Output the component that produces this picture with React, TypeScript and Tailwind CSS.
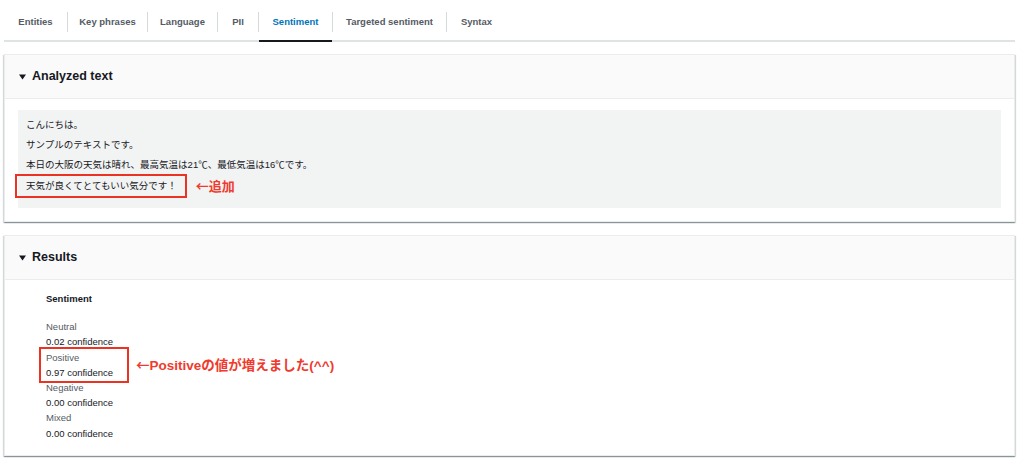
import React from "react";

const FONT = { fontFamily: '"Liberation Sans", "Noto Sans CJK JP", sans-serif' };
const CJK = { fontFamily: '"Noto Sans CJK JP", sans-serif' };

const tabs: { label: string; w: string; active?: boolean }[] = [
  { label: "Entities", w: "w-[63px]" },
  { label: "Key phrases", w: "w-[79px]" },
  { label: "Language", w: "w-[69px]" },
  { label: "PII", w: "w-[40px]" },
  { label: "Sentiment", w: "w-[73px]", active: true },
  { label: "Targeted sentiment", w: "w-[113px]" },
  { label: "Syntax", w: "w-[59px]" },
];

function Caret() {
  return (
    <svg width="7" height="6" viewBox="0 0 7 6" className="shrink-0">
      <path d="M0 0.5 H7 L3.5 5.5 Z" fill="#16191f" />
    </svg>
  );
}

function PanelHeader({ title }: { title: string }) {
  return (
    <div className="h-[44px] bg-[#fafafa] border-b border-[#eaeded] flex items-center pl-[14px] gap-[6px]">
      <Caret />
      <span className="text-[12.5px] font-bold text-[#16191f] leading-none">{title}</span>
    </div>
  );
}

const panelCls =
  "ml-[4px] w-[1011px] bg-white border border-[#eaeded] shadow-[0_1px_1px_0_rgba(0,28,36,0.3),1px_1px_1px_0_rgba(0,28,36,0.12),-1px_1px_1px_0_rgba(0,28,36,0.12)]";

const results = [
  { label: "Neutral", value: "0.02 confidence" },
  { label: "Positive", value: "0.97 confidence", mark: true },
  { label: "Negative", value: "0.00 confidence" },
  { label: "Mixed", value: "0.00 confidence" },
];

export default function App() {
  return (
    <div className="w-[1024px] h-[460px] bg-white overflow-hidden" style={FONT}>
      {/* Tabs */}
      <div className="ml-[4px] w-[1011px] h-[42px] flex border-b-2 border-[#dfe3e3]">
        {tabs.map((t, i) => (
          <React.Fragment key={t.label}>
            {i > 0 && <div className="w-px h-[20px] self-center mt-[4px] bg-[#d5dbdb]" />}
            <div
              className={`${t.w} mb-[-2px] pt-[4px] flex items-center justify-center border-b-2 text-[9.5px] font-bold ${
                t.active ? "border-[#16191f] text-[#0073bb]" : "border-transparent text-[#545b64]"
              }`}
            >
              {t.label}
            </div>
          </React.Fragment>
        ))}
      </div>

      {/* Analyzed text */}
      <div className={`${panelCls} mt-[12px]`}>
        <PanelHeader title="Analyzed text" />
        <div className="pt-[11px] pl-[13px] pr-[13px] pb-[13px]">
          <div className="bg-[#f2f3f3] pt-[5px] pb-[12px] pl-[8px] text-[9.5px] leading-[20px] text-[#16191f]">
            <div>こんにちは。</div>
            <div>サンプルのテキストです。</div>
            <div>本日の大阪の天気は晴れ、最高気温は21℃、最低気温は16℃です。</div>
            <div className="mt-[1px]">
              <span className="relative inline-block">
                天気が良くてとてもいい気分です！
                <span className="absolute -top-[2px] -bottom-[2px] -left-[11px] -right-[10px] border-2 border-[#ea3323]" />
                <span className="absolute top-1/2 -translate-y-1/2 left-[calc(100%+19px)] whitespace-nowrap text-[13px] font-bold text-[#ef3a2d] leading-none">
                  <span style={CJK}>←</span>追加
                </span>
              </span>
            </div>
          </div>
        </div>
      </div>

      {/* Results */}
      <div className={`${panelCls} mt-[13px]`}>
        <PanelHeader title="Results" />
        <div className="pt-[11px] pl-[41px] pb-[14px] text-[9.5px] leading-[15.2px]">
          <div className="font-bold text-[#16191f] mb-[13px]">Sentiment</div>
          {results.map((r) =>
            r.mark ? (
              <div key={r.label} className="relative w-fit">
                <div className="text-[#545b64]">{r.label}</div>
                <div className="text-[#16191f]">{r.value}</div>
                <span className="absolute -top-[3px] -bottom-[3px] -left-[7px] -right-[16px] border-2 border-[#ea3323]" />
                <span className="absolute top-1/2 -translate-y-1/2 left-[calc(100%+23px)] whitespace-nowrap text-[13.5px] font-bold text-[#ef3a2d] leading-none">
                  <span style={CJK}>←</span>Positiveの値が増えました(^^)
                </span>
              </div>
            ) : (
              <div key={r.label}>
                <div className="text-[#545b64]">{r.label}</div>
                <div className="text-[#16191f]">{r.value}</div>
              </div>
            )
          )}
        </div>
      </div>
    </div>
  );
}
